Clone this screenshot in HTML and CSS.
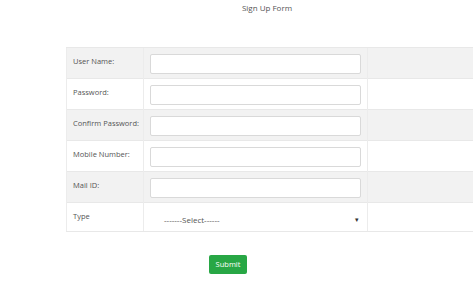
FILE: index.html
```html
<!DOCTYPE html>
<html lang="en">

<head>
    <meta charset="UTF-8">
    <meta name="viewport" content="width=device-width, initial-scale=1.0">
    <title>Sign Up Form</title>
    <link rel="stylesheet" href="styles.css">
</head>

<body>
    <h1 class="title">Sign Up Form</h1>

    <form class="signup">
        <table class="form-table">
            <tr>
                <td class="label">User Name:</td>
                <td class="field"><input type="text" name="username"></td>
                <td class="extra"></td>
            </tr>
            <tr>
                <td class="label">Password:</td>
                <td class="field"><input type="password" name="password"></td>
                <td class="extra"></td>
            </tr>
            <tr>
                <td class="label">Confirm Password:</td>
                <td class="field"><input type="password" name="confirm"></td>
                <td class="extra"></td>
            </tr>
            <tr>
                <td class="label">Mobile Number:</td>
                <td class="field"><input type="text" name="mobile"></td>
                <td class="extra"></td>
            </tr>
            <tr>
                <td class="label">Mail ID:</td>
                <td class="field"><input type="text" name="mail"></td>
                <td class="extra"></td>
            </tr>
            <tr class="last">
                <td class="label">Type</td>
                <td class="field">
                    <div class="select-box">
                        <span>-------Select------</span>
                        <span class="arrow">&#9662;</span>
                    </div>
                </td>
                <td class="extra"></td>
            </tr>
        </table>

        <div class="actions">
            <button type="button" class="submit">Submit</button>
        </div>
    </form>
</body>

</html>
```

FILE: styles.css
```css
body {
    font-family: "Open Sans", "Noto Sans", sans-serif;
    margin: 0;
    color: #555;
}

.title {
    font-size: 8px;
    font-weight: normal;
    text-align: center;
    margin: 3px 0 0 60px;
    height: 44px;
    line-height: 9px;
    color: #555;
}

.signup {
    margin-left: 66px;
}

.form-table {
    width: 407px;
    border-collapse: collapse;
    table-layout: fixed;
    font-size: 7.5px;
}

.form-table td {
    border-top: 1px solid #e8e8e8;
    border-left: 1px solid #ececec;
    height: 30px;
    padding: 0;
    vertical-align: top;
}

.form-table tr:nth-child(odd) td {
    background-color: #f2f2f2;
}

.form-table tr.last td {
    border-bottom: 1px solid #e8e8e8;
    height: 28px;
}

.label {
    width: 70px;
    padding: 0 0 0 6px !important;
    line-height: 26px;
    color: #555;
}

.field {
    width: 223px;
}

.field input {
    display: block;
    width: 211px;
    height: 20px;
    margin: 6px 0 0 6px;
    padding: 0;
    border: 1px solid #d9d9d9;
    border-radius: 2px;
    background: #fff;
    box-sizing: border-box;
}

.select-box {
    display: flex;
    justify-content: space-between;
    align-items: center;
    margin: 6px 0 0 20px;
    width: 195px;
    height: 20px;
    font-size: 8px;
    color: #555;
}

.arrow {
    font-size: 7px;
    color: #333;
}

.actions {
    padding: 18px 0 0 143px;
}

.submit {
    background-color: #28a745;
    color: white;
    font-family: "Open Sans", sans-serif;
    font-size: 7.5px;
    width: 38px;
    height: 19px;
    padding: 0;
    border: none;
    border-radius: 2px;
    cursor: pointer;
}
```
